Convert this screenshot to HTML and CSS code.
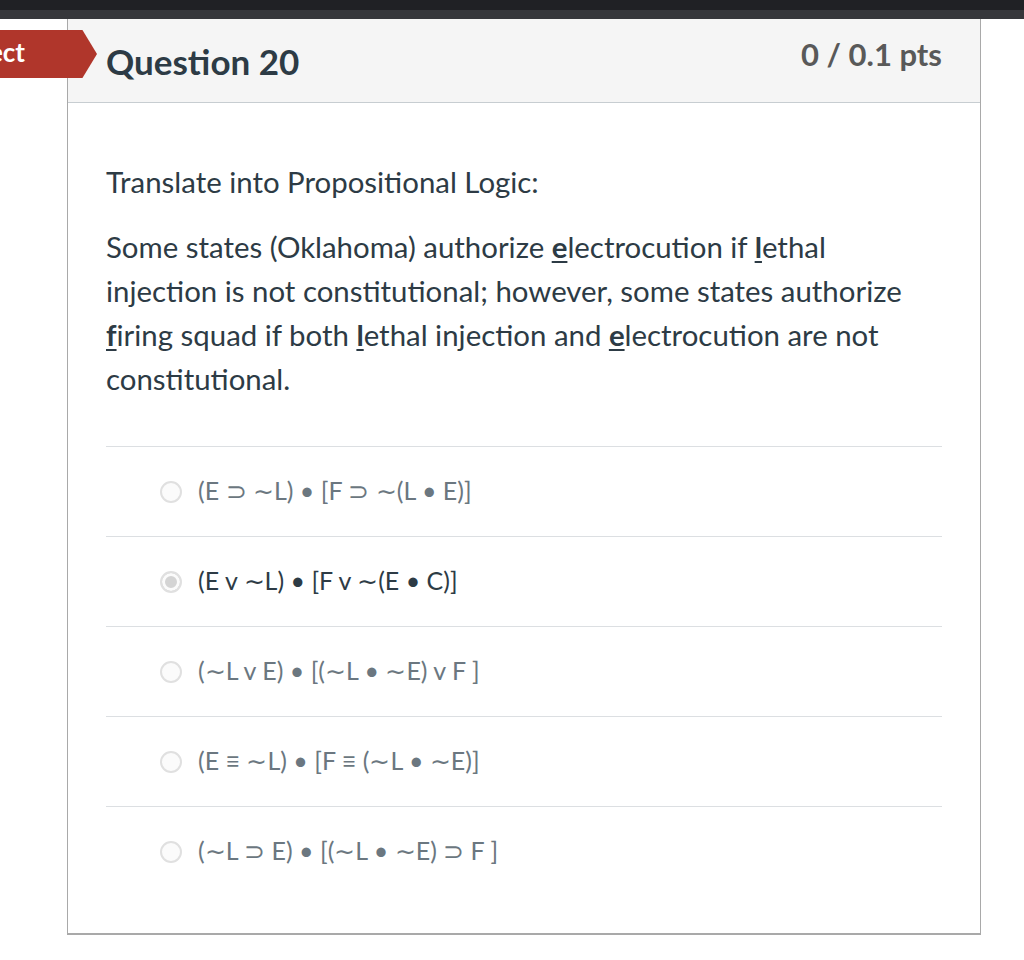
FILE: index.html
```html
<!DOCTYPE html>
<html>
<head>
<meta charset="utf-8">
<link rel="stylesheet" href="styles.css">
</head>
<body>
<div class="topbar"></div>
<div class="topstrip"></div>
<div class="page">
  <div class="banner"><span>Incorrect</span></div>
  <div class="card">
    <div class="card-header">
      <h2 class="q-title">Question 20</h2>
      <div class="q-pts">0 / 0.1 pts</div>
    </div>
    <div class="card-body">
      <p class="prompt">Translate into Propositional Logic:</p>
      <p class="prompt para">Some states (Oklahoma) authorize <u>e</u>lectrocution if <u>l</u>ethal injection is not constitutional; however, some states authorize <u>f</u>iring squad if both <u>l</u>ethal injection and <u>e</u>lectrocution are not constitutional.</p>
      <div class="answers">
        <div class="answer"><span class="radio"></span><span class="ans-text">(E ⊃ ∼L) • [F ⊃ ∼(L • E)]</span></div>
        <div class="answer selected"><span class="radio"></span><span class="ans-text">(E v ∼L) • [F v ∼(E • C)]</span></div>
        <div class="answer"><span class="radio"></span><span class="ans-text">(∼L v E) • [(∼L • ∼E) v F ]</span></div>
        <div class="answer"><span class="radio"></span><span class="ans-text">(E ≡ ∼L) • [F ≡ (∼L • ∼E)]</span></div>
        <div class="answer"><span class="radio"></span><span class="ans-text">(∼L ⊃ E) • [(∼L • ∼E) ⊃ F ]</span></div>
      </div>
    </div>
  </div>
</div>
</body>
</html>
```

FILE: styles.css
```css
html, body {
  margin: 0;
  padding: 0;
  background: #ffffff;
  font-family: Lato, "Open Sans", "Liberation Sans", sans-serif;
  color: #2d3b45;
}
.topbar {
  height: 10px;
  background: #202125;
}
.topstrip {
  height: 9px;
  background: #36373b;
}
.page {
  position: relative;
  height: 941px;
}
.banner {
  position: absolute;
  left: 0;
  top: 11px;
  width: 97px;
  height: 48px;
  background: #b0362b;
  clip-path: polygon(0 0, 85% 0, 100% 50%, 85% 100%, 0 100%);
  overflow: hidden;
  z-index: 2;
}
.banner span {
  position: absolute;
  right: 72px;
  top: 6px;
  color: #ffffff;
  font-size: 26px;
  font-weight: 700;
  white-space: nowrap;
}
.card {
  margin-left: 67px;
  width: 914px;
  height: 916px;
  box-sizing: border-box;
  border: 1px solid #a9a9a9;
  border-top: none;
  border-bottom: 2px solid #a9a9a9;
}
.card-header {
  height: 84px;
  box-sizing: border-box;
  background: #f5f5f5;
  border-bottom: 1px solid #c7cdd1;
  display: flex;
  justify-content: space-between;
  padding: 0 38px;
}
.q-title {
  margin: 20px 0 0 0;
  font-size: 35px;
  font-weight: 700;
  color: #2d3b45;
  line-height: 44px;
}
.q-pts {
  margin-top: 15px;
  font-size: 31px;
  font-weight: 700;
  color: #595959;
  line-height: 40px;
}
.card-body {
  padding: 57px 38px 0 38px;
}
.prompt {
  margin: 0;
  font-size: 29.4px;
  line-height: 44px;
  color: #2d3b45;
  max-width: 810px;
}
.prompt u {
  font-weight: 700;
  text-decoration-thickness: 2px;
  text-underline-offset: 3px;
}
.para {
  margin-top: 21px;
}
.answers {
  margin-top: 45px;
}
.answer {
  border-top: 1px solid #dcdfe2;
  height: 90px;
  display: flex;
  align-items: center;
  padding-left: 54px;
  box-sizing: border-box;
}
.radio {
  width: 18px;
  height: 18px;
  border: 2px solid #e0e0e0;
  border-radius: 50%;
  background: #fbfbfb;
  box-sizing: content-box;
  margin-right: 16px;
  flex: none;
}
.selected .radio {
  background: #d4d4d4;
  box-shadow: inset 0 0 0 3px #fbfbfb;
}
.ans-text {
  font-size: 25px;
  color: #6b7780;
  padding-bottom: 2px;
}
.selected .ans-text {
  color: #2d3b45;
}
```
